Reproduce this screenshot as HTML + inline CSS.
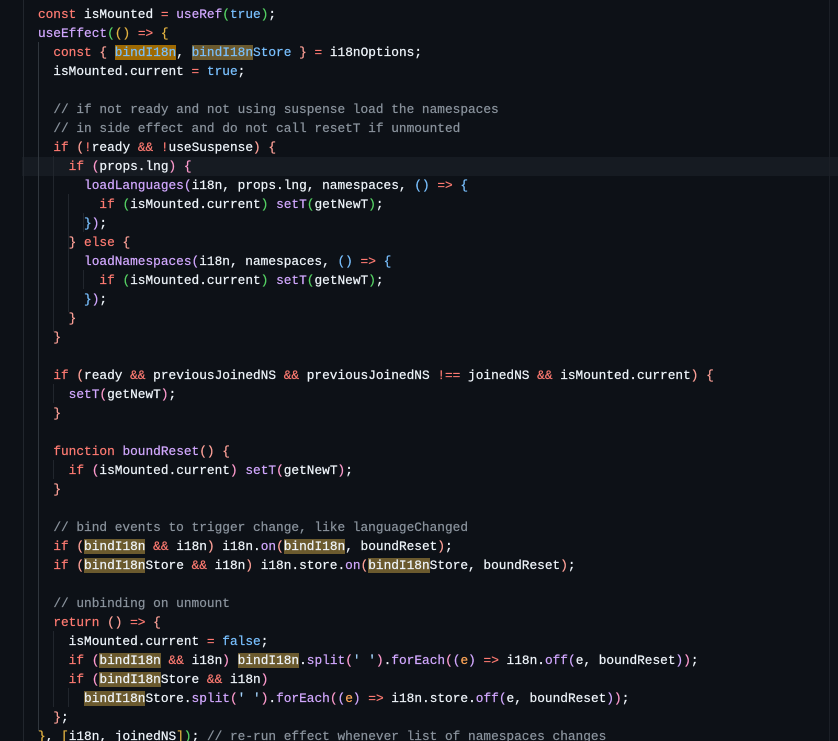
<!DOCTYPE html>
<html><head><meta charset="utf-8"><style>
html,body{margin:0;padding:0;background:#0d1117;width:838px;height:741px;overflow:hidden;position:relative}
pre{position:absolute;left:22.6px;top:4.5px;margin:0;font-family:"Liberation Mono",monospace;font-size:12.8px;line-height:19px;color:#f0f6fc;white-space:pre;z-index:2;-webkit-text-stroke:0.2px currentColor}
.k{color:#ff7b72}.f{color:#d2a8ff}.c{color:#79c0ff}.m{color:#8b949e}.s{color:#a5d6ff}.p{color:#ffa657}
.b0{color:#79c0ff}.b1{color:#56d364}.b2{color:#e3b341}.b3{color:#ffa198}.b4{color:#ff9bce}.b5{color:#d2a8ff}.b6{color:#79c0ff}.b7{color:#56d364}
.h1{background:#9e6a03}.h2{background:#6b5a2e}
.g{position:absolute;width:1px;background:#21262d;z-index:1}
.cur{position:absolute;left:22px;right:0;top:156.5px;height:19px;background:#161b22;z-index:0}
</style></head><body>
<div class="cur"></div>
<div class="g" style="left:23px;top:0;height:741px"></div>
<div class="g" style="left:829px;top:0;height:741px;background:#1b1f26"></div>
<div class="g" style="left:38px;top:42px;height:689px;background:#30363d"></div>
<div class="g" style="left:53px;top:156px;height:176px"></div>
<div class="g" style="left:68px;top:194px;height:118px"></div>
<div class="g" style="left:83px;top:213px;height:19px"></div>
<div class="g" style="left:83px;top:270px;height:19px"></div>
<div class="g" style="left:53px;top:384px;height:19px"></div>
<div class="g" style="left:53px;top:460px;height:19px"></div>
<div class="g" style="left:53px;top:631px;height:76px"></div>
<div class="g" style="left:68px;top:688px;height:19px"></div>
<pre>  <span class="k">const</span> isMounted <span class="k">=</span> <span class="f">useRef</span><span class="b1">(</span><span class="c">true</span><span class="b1">)</span>;
  <span class="f">useEffect</span><span class="b1">(</span><span class="b2">()</span> <span class="k">=&gt;</span> <span class="b2">{</span>
    <span class="k">const</span> <span class="b3">{</span> <span class="c h1">bindI18n</span>, <span class="c"><span class="h2">bindI18n</span>Store</span> <span class="b3">}</span> <span class="k">=</span> i18nOptions;
    isMounted.current <span class="k">=</span> <span class="c">true</span>;

    <span class="m">// if not ready and not using suspense load the namespaces</span>
    <span class="m">// in side effect and do not call resetT if unmounted</span>
    <span class="k">if</span> <span class="b3">(</span><span class="k">!</span>ready <span class="k">&amp;&amp;</span> <span class="k">!</span>useSuspense<span class="b3">)</span> <span class="b3">{</span>
      <span class="k">if</span> <span class="b4">(</span>props.lng<span class="b4">)</span> <span class="b4">{</span>
        <span class="f">loadLanguages</span><span class="b5">(</span>i18n, props.lng, namespaces, <span class="b6">()</span> <span class="k">=&gt;</span> <span class="b6">{</span>
          <span class="k">if</span> <span class="b7">(</span>isMounted.current<span class="b7">)</span> <span class="f">setT</span><span class="b7">(</span>getNewT<span class="b7">)</span>;
        <span class="b6">}</span><span class="b5">)</span>;
      <span class="b3">}</span> <span class="k">else</span> <span class="b3">{</span>
        <span class="f">loadNamespaces</span><span class="b5">(</span>i18n, namespaces, <span class="b6">()</span> <span class="k">=&gt;</span> <span class="b6">{</span>
          <span class="k">if</span> <span class="b7">(</span>isMounted.current<span class="b7">)</span> <span class="f">setT</span><span class="b7">(</span>getNewT<span class="b7">)</span>;
        <span class="b6">}</span><span class="b5">)</span>;
      <span class="b3">}</span>
    <span class="b3">}</span>

    <span class="k">if</span> <span class="b3">(</span>ready <span class="k">&amp;&amp;</span> previousJoinedNS <span class="k">&amp;&amp;</span> previousJoinedNS <span class="k">!==</span> joinedNS <span class="k">&amp;&amp;</span> isMounted.current<span class="b3">)</span> <span class="b3">{</span>
      <span class="f">setT</span><span class="b4">(</span>getNewT<span class="b4">)</span>;
    <span class="b3">}</span>

    <span class="k">function</span> <span class="f">boundReset</span><span class="b3">()</span> <span class="b3">{</span>
      <span class="k">if</span> <span class="b4">(</span>isMounted.current<span class="b4">)</span> <span class="f">setT</span><span class="b4">(</span>getNewT<span class="b4">)</span>;
    <span class="b3">}</span>

    <span class="m">// bind events to trigger change, like languageChanged</span>
    <span class="k">if</span> <span class="b3">(</span><span class="h2">bindI18n</span> <span class="k">&amp;&amp;</span> i18n<span class="b3">)</span> i18n.<span class="f">on</span><span class="b3">(</span><span class="h2">bindI18n</span>, boundReset<span class="b3">)</span>;
    <span class="k">if</span> <span class="b3">(</span><span class="h2">bindI18n</span>Store <span class="k">&amp;&amp;</span> i18n<span class="b3">)</span> i18n.store.<span class="f">on</span><span class="b3">(</span><span class="h2">bindI18n</span>Store, boundReset<span class="b3">)</span>;

    <span class="m">// unbinding on unmount</span>
    <span class="k">return</span> <span class="b3">()</span> <span class="k">=&gt;</span> <span class="b3">{</span>
      isMounted.current <span class="k">=</span> <span class="c">false</span>;
      <span class="k">if</span> <span class="b4">(</span><span class="h2">bindI18n</span> <span class="k">&amp;&amp;</span> i18n<span class="b4">)</span> <span class="h2">bindI18n</span>.<span class="f">split</span><span class="b4">(</span><span class="s">' '</span><span class="b4">)</span>.<span class="f">forEach</span><span class="b4">(</span><span class="b5">(</span><span class="p">e</span><span class="b5">)</span> <span class="k">=&gt;</span> i18n.<span class="f">off</span><span class="b5">(</span>e, boundReset<span class="b5">)</span><span class="b4">)</span>;
      <span class="k">if</span> <span class="b4">(</span><span class="h2">bindI18n</span>Store <span class="k">&amp;&amp;</span> i18n<span class="b4">)</span>
        <span class="h2">bindI18n</span>Store.<span class="f">split</span><span class="b4">(</span><span class="s">' '</span><span class="b4">)</span>.<span class="f">forEach</span><span class="b4">(</span><span class="b5">(</span><span class="p">e</span><span class="b5">)</span> <span class="k">=&gt;</span> i18n.store.<span class="f">off</span><span class="b5">(</span>e, boundReset<span class="b5">)</span><span class="b4">)</span>;
    <span class="b3">}</span>;
  <span class="b2">}</span>, <span class="b2">[</span>i18n, joinedNS<span class="b2">]</span><span class="b1">)</span>; <span class="m">// re-run effect whenever list of namespaces changes</span>
</pre>
</body></html>
